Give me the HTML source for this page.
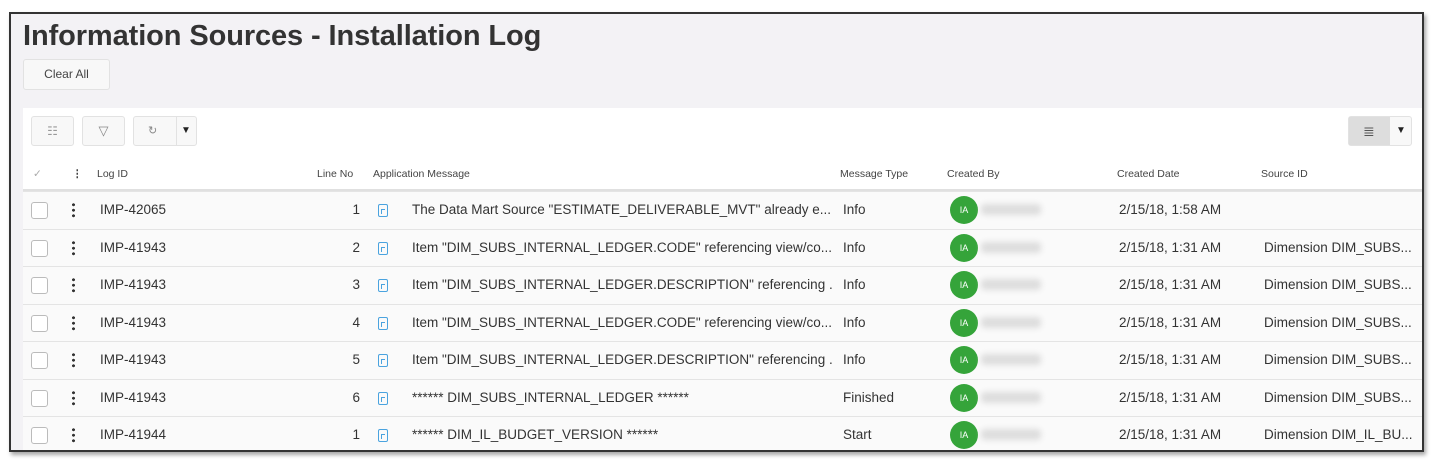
<!DOCTYPE html><html><head><style>
body{margin:0;width:1434px;height:465px;background:#fff;font-family:"Liberation Sans",sans-serif;position:relative;overflow:hidden}
.frame{position:absolute;left:9px;top:12px;width:1411px;height:436px;border:2px solid #333;background:#f3f2f5;box-shadow:2px 3px 4px rgba(0,0,0,.35);overflow:hidden}
h1{position:absolute;left:12px;top:6px;margin:0;font-size:29px;font-weight:bold;color:#333;letter-spacing:-.1px}
.btn{position:absolute;background:#f8f8f8;border:1px solid #e2e2e2;border-radius:3px;box-sizing:border-box}
.panel{position:absolute;left:12px;top:94px;width:1399px;height:350px;background:#fff}
.hdr{position:absolute;top:154px;font-size:10.5px;color:#444}
.row{position:absolute;left:12px;width:1399px;height:37px;border-top:1px solid #e4e4e4;background:#fafafa;font-size:13.5px;color:#333}
.row span{position:absolute;top:10px;white-space:nowrap;overflow:hidden}
.cb{position:absolute;left:8px;top:10px;width:15px;height:15px;border:1px solid #bbb;border-radius:3px;background:#fff}
.dots{position:absolute;left:49px;top:10px;width:3px;height:16px;background:radial-gradient(circle,#333 1.4px,transparent 1.6px) 0 0/3px 5.5px repeat-y}
.ic{position:absolute;left:355px;top:12px;width:8px;height:11px;border:1.5px solid #4aa3df;border-radius:2px}
.ic:after{content:"";position:absolute;left:2px;top:4px;width:3px;height:4px;border:1px solid #4aa3df;border-right:none;border-bottom:none}
.av{position:absolute;left:927px;top:4px;width:28px;height:28px;border-radius:50%;background:#35a43a;color:#fff;font-size:9px;text-align:center;line-height:28px}
.blur{position:absolute;left:958px;top:12px;width:60px;height:11px;background:#ddd;filter:blur(3px);border-radius:4px}
</style></head><body>
<div class="frame">
<h1>Information Sources - Installation Log</h1>
<div class="btn" style="left:12px;top:45px;width:87px;height:31px;font-size:12px;color:#444;text-align:center;line-height:29px">Clear All</div>
<div class="panel"></div>
<div class="btn" style="left:20px;top:102px;width:43px;height:30px;color:#999;font-size:12px;text-align:center;line-height:28px">☷</div>
<div class="btn" style="left:71px;top:102px;width:43px;height:30px;color:#888;font-size:13px;text-align:center;line-height:28px">▽</div>
<div class="btn" style="left:122px;top:102px;width:64px;height:30px;color:#888;font-size:11px;line-height:28px"><span style="position:absolute;left:14px">↻</span><span style="position:absolute;left:42px;top:0;height:28px;border-left:1px solid #e2e2e2"></span><span style="position:absolute;left:47px;color:#222;font-size:10px">▼</span></div>
<div class="btn" style="left:1337px;top:102px;width:64px;height:30px;line-height:28px"><span style="position:absolute;left:0;top:0;width:41px;height:28px;background:#ddd"></span><span style="position:absolute;left:14px;color:#555;font-size:14px">≣</span><span style="position:absolute;left:47px;color:#222;font-size:10px">▼</span></div>
<span class="hdr" style="left:22px;color:#aaa">✓</span>
<span class="hdr" style="left:61px;font-weight:bold">⋮</span>
<span class="hdr" style="left:86px">Log ID</span>
<span class="hdr" style="left:306px">Line No</span>
<span class="hdr" style="left:362px">Application Message</span>
<span class="hdr" style="left:829px">Message Type</span>
<span class="hdr" style="left:936px">Created By</span>
<span class="hdr" style="left:1106px">Created Date</span>
<span class="hdr" style="left:1250px">Source ID</span>
<div style="position:absolute;left:12px;top:175px;width:1399px;height:2px;background:#e0e0e0"></div>
<div id="rows"></div>
</div>
<script>
var d=[["IMP-42065","1","The Data Mart Source \"ESTIMATE_DELIVERABLE_MVT\" already e...","Info","2/15/18, 1:58 AM",""],
["IMP-41943","2","Item \"DIM_SUBS_INTERNAL_LEDGER.CODE\" referencing view/co...","Info","2/15/18, 1:31 AM","Dimension DIM_SUBS..."],
["IMP-41943","3","Item \"DIM_SUBS_INTERNAL_LEDGER.DESCRIPTION\" referencing ...","Info","2/15/18, 1:31 AM","Dimension DIM_SUBS..."],
["IMP-41943","4","Item \"DIM_SUBS_INTERNAL_LEDGER.CODE\" referencing view/co...","Info","2/15/18, 1:31 AM","Dimension DIM_SUBS..."],
["IMP-41943","5","Item \"DIM_SUBS_INTERNAL_LEDGER.DESCRIPTION\" referencing ...","Info","2/15/18, 1:31 AM","Dimension DIM_SUBS..."],
["IMP-41943","6","****** DIM_SUBS_INTERNAL_LEDGER ******","Finished","2/15/18, 1:31 AM","Dimension DIM_SUBS..."],
["IMP-41944","1","****** DIM_IL_BUDGET_VERSION ******","Start","2/15/18, 1:31 AM","Dimension DIM_IL_BU..."]];
var h="";d.forEach(function(r,i){var t=177+i*37.5;
h+='<div class="row" style="top:'+t+'px"><div class="cb"></div><div class="dots"></div><span style="left:77px">'+r[0]+'</span><span style="left:300px;width:37px;text-align:right">'+r[1]+'</span><div class="ic"></div><span style="left:389px;width:420px">'+r[2]+'</span><span style="left:820px">'+r[3]+'</span><div class="av">IA</div><div class="blur"></div><span style="left:1096px">'+r[4]+'</span><span style="left:1241px;width:152px">'+r[5]+'</span></div>';});
document.getElementById("rows").innerHTML=h;
</script>
</body></html>
